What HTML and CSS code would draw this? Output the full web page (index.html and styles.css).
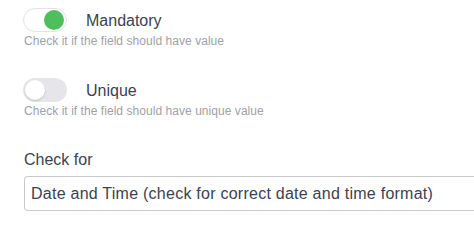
FILE: index.html
```html
<!DOCTYPE html>
<html>
<head>
<meta charset="utf-8">
<link rel="stylesheet" href="styles.css">
</head>
<body>
<div class="form">
  <div class="switch-field">
    <div class="switch-row">
      <span class="switch switch-on"><span class="knob"></span></span>
      <span class="switch-label">Mandatory</span>
    </div>
    <div class="hint">Check it if the field should have value</div>
  </div>
  <div class="switch-field second">
    <div class="switch-row">
      <span class="switch switch-off"><span class="knob"></span></span>
      <span class="switch-label">Unique</span>
    </div>
    <div class="hint">Check it if the field should have unique value</div>
  </div>
  <div class="select-field">
    <div class="field-label">Check for</div>
    <div class="select-box">Date and Time (check for correct date and time format)</div>
  </div>
</div>
</body>
</html>
```

FILE: styles.css
```css
html, body {
  margin: 0;
  padding: 0;
  background: #ffffff;
  width: 474px;
  height: 225px;
  overflow: hidden;
}
body {
  font-family: "Liberation Sans", Arial, sans-serif;
  color: #3b4250;
}
.form {
  padding: 8px 0 0 24px;
}
.switch-row {
  display: flex;
  align-items: center;
  gap: 19px;
  height: 24px;
}
.switch {
  box-sizing: border-box;
  width: 44px;
  height: 24px;
  border-radius: 12px;
  display: flex;
  align-items: center;
  padding: 0 2px;
  margin-left: -1px;
}
.switch-on {
  background: #ffffff;
  border: 1px solid #e3e3e6;
  justify-content: flex-end;
}
.switch-off {
  background: #e6e6ea;
  justify-content: flex-start;
}
.knob {
  width: 20px;
  height: 20px;
  border-radius: 50%;
}
.switch-on .knob {
  background: #4fbe5d;
}
.switch-off .knob {
  background: #ffffff;
  box-shadow: 0 1px 2px rgba(0,0,0,0.18);
}
.switch-label {
  font-size: 16px;
  line-height: 19px;
  padding-top: 1px;
  color: #3b4250;
}
.hint {
  margin-top: 2px;
  font-size: 12px;
  line-height: 14px;
  color: #9da1a8;
  letter-spacing: 0.05px;
}
.second {
  margin-top: 30px;
}
.select-field {
  margin-top: 32px;
}
.field-label {
  font-size: 16px;
  line-height: 19px;
  color: #3b4250;
}
.select-box {
  margin-top: 7px;
  box-sizing: border-box;
  height: 35px;
  border: 1px solid #c9c9cc;
  border-right: none;
  border-radius: 4px 0 0 4px;
  padding: 0 6px;
  display: flex;
  align-items: center;
  font-size: 16px;
  letter-spacing: 0.25px;
  color: #3b4250;
  white-space: nowrap;
  overflow: hidden;
}
```
